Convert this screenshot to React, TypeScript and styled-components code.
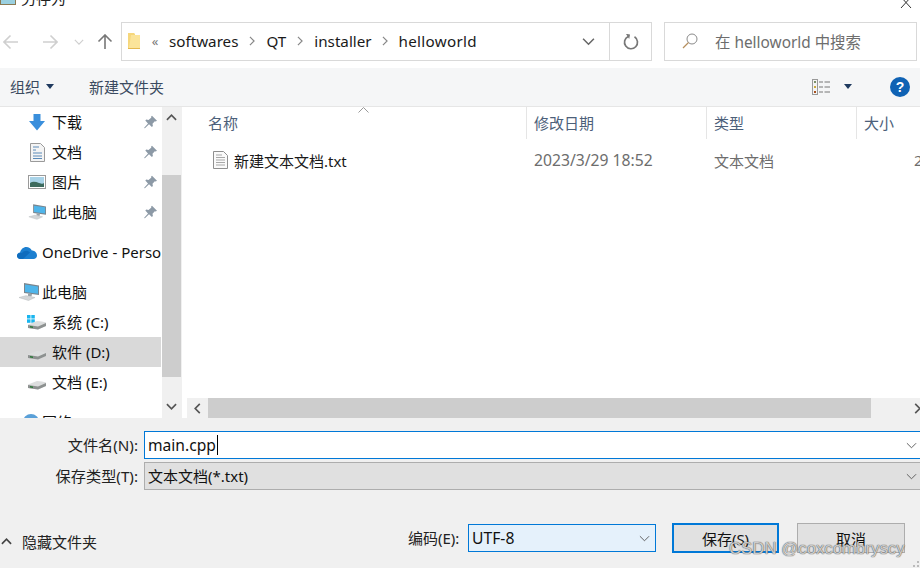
import React from "react";
import styled, { createGlobalStyle } from "styled-components";

const Global = createGlobalStyle`
  html, body { margin: 0; padding: 0; background: #fff; }
  #root { width: 920px; height: 568px; overflow: hidden; }
  * { box-sizing: border-box; }
`;
const FONT = `"Noto Sans", "Noto Sans CJK SC", sans-serif`;

const Dialog = styled.div`
  position: relative;
  width: 920px;
  height: 568px;
  display: flex;
  flex-direction: column;
  overflow: hidden;
  font-family: ${FONT};
  font-size: 15px;
  color: #111;
  background: #fff;
`;
const TitleBar = styled.div`
  height: 22px;
  flex: none;
  display: flex;
  justify-content: space-between;
  overflow: hidden;
`;
const TitleLeft = styled.div`
  display: flex;
  align-items: center;
  gap: 5px;
  height: 22px;
  margin-top: -14px;
  font-size: 15px;
  color: #222;
`;
const CloseMark = styled.svg`
  margin: 0 8px 0 0;
`;
const AddressRow = styled.div`
  height: 46px;
  flex: none;
  display: flex;
  align-items: flex-start;
`;
const NavButtons = styled.div`
  width: 121px;
  height: 39px;
  flex: none;
  display: flex;
  align-items: center;
`;
const NavSlot = styled.span<{ $w: number }>`
  width: ${(p) => p.$w}px;
  flex: none;
  display: flex;
  justify-content: center;
`;
const AddressBox = styled.div`
  width: 531px;
  height: 39px;
  flex: none;
  border: 1px solid #d9d9d9;
  display: flex;
  align-items: center;
`;
const Crumbs = styled.div`
  flex: 1;
  display: flex;
  align-items: center;
  padding: 0 0 2px 5px;
  font-size: 15.2px;
  color: #1a1a1a;
`;
const CrumbText = styled.span<{ $wide?: boolean }>`
  white-space: nowrap;
  letter-spacing: ${(p) => (p.$wide ? "0.3px" : "0")};
`;
const CrumbSep = styled.span<{ $w: number }>`
  width: ${(p) => p.$w}px;
  flex: none;
  display: flex;
  justify-content: center;
`;
const Guillemet = styled.span`
  font-size: 13px;
  color: #777;
`;
const AddrChevron = styled.span`
  width: 42px;
  flex: none;
  display: flex;
  justify-content: center;
`;
const RefreshSlot = styled.span`
  width: 42px;
  height: 37px;
  flex: none;
  border-left: 1px solid #d9d9d9;
  display: flex;
  align-items: center;
  justify-content: center;
`;
const SearchBox = styled.div`
  width: 253px;
  height: 39px;
  flex: none;
  margin-left: 12px;
  border: 1px solid #d9d9d9;
  display: flex;
  align-items: center;
  padding: 0 0 1px 17px;
  gap: 17px;
  font-size: 15.4px;
  color: #6d6d6d;
`;
const Toolbar = styled.div`
  height: 39px;
  flex: none;
  background: #f5f6f7;
  border-bottom: 1px solid #e6e6e6;
  display: flex;
  align-items: center;
  padding: 0 10px 1px 10px;
  font-size: 15px;
  color: #3a4a60;
`;
const ToolGroup = styled.div`
  display: flex;
  align-items: center;
  gap: 6px;
`;
const ViewDrop = styled.div`
  display: flex;
  align-items: center;
  gap: 14px;
  margin-right: 38px;
`;
const NewFolder = styled.span`
  margin-left: 35px;
`;
const ToolSpacer = styled.div`
  flex: 1;
`;
const Main = styled.div`
  height: 311px;
  flex: none;
  display: flex;
  overflow: hidden;
`;
const Sidebar = styled.div`
  width: 162px;
  flex: none;
  display: flex;
  flex-direction: column;
  overflow: hidden;
`;
const NavRow = styled.div<{ $indent: number; $gap: number; $sel?: boolean; $top?: number }>`
  height: 30px;
  flex: none;
  width: 161px;
  display: flex;
  align-items: center;
  padding-left: ${(p) => p.$indent}px;
  margin-top: ${(p) => p.$top ?? 0}px;
  gap: ${(p) => p.$gap}px;
  background: ${(p) => (p.$sel ? "#d9d9d9" : "transparent")};
  white-space: nowrap;
  overflow: hidden;
  color: #111;
`;
const NavIconSlot = styled.span`
  width: 18px;
  flex: none;
  display: flex;
  justify-content: center;
`;
const NavLabel = styled.span<{ $latin?: boolean }>`
  flex: 1;
  overflow: hidden;
  white-space: nowrap;
  padding-bottom: ${(p) => (p.$latin ? 0 : 2)}px;
`;
const PinSlot = styled.span`
  width: 17px;
  flex: none;
  display: flex;
`;
const VScroll = styled.div`
  width: 20px;
  flex: none;
  background: #f0f0f0;
  display: flex;
  flex-direction: column;
`;
const VCap = styled.div<{ $h: number; $pad: number }>`
  height: ${(p) => p.$h}px;
  flex: none;
  display: flex;
  justify-content: center;
  padding: ${(p) => p.$pad}px 2px 0 0;
`;
const VThumb = styled.div`
  height: 202px;
  width: 19px;
  flex: none;
  background: #cdcdcd;
`;
const List = styled.div`
  position: relative;
  flex: 1;
  margin-left: 3px;
  display: flex;
  flex-direction: column;
  min-width: 0;
`;
const SortCaret = styled.svg`
  position: absolute;
  left: 173px;
  top: 0;
`;
const Header = styled.div`
  height: 32px;
  flex: none;
  display: grid;
  grid-template-columns: 341px 180px 150px 1fr;
  color: #4c607a;
`;
const HeadCell = styled.div<{ $first?: boolean }>`
  display: flex;
  align-items: center;
  padding: 0 0 2px ${(p) => (p.$first ? 23 : 7)}px;
  border-left: ${(p) => (p.$first ? "none" : "1px solid #e5e5e5")};
`;
const FileRow = styled.div`
  height: 30px;
  margin-top: 7px;
  flex: none;
  display: grid;
  grid-template-columns: 341px 180px 150px 1fr;
  align-items: center;
  padding-bottom: 2px;
`;
const NameCell = styled.div`
  display: flex;
  align-items: center;
  gap: 6px;
  padding-left: 28px;
  color: #1a1a1a;
`;
const MetaCell = styled.div<{ $pad?: number; $size?: number }>`
  padding-left: ${(p) => p.$pad ?? 8}px;
  font-size: ${(p) => p.$size ?? 15}px;
  color: #6d6d6d;
  white-space: nowrap;
`;
const ListFill = styled.div`
  flex: 1;
`;
const HScroll = styled.div`
  height: 20px;
  flex: none;
  margin: 0 0 0 2px;
  background: #f0f0f0;
  display: flex;
  align-items: stretch;
`;
const HCap = styled.div<{ $w: number }>`
  width: ${(p) => p.$w}px;
  flex: none;
  display: flex;
  align-items: center;
  justify-content: center;
`;
const HThumb = styled.div`
  width: 663px;
  flex: none;
  background: #cdcdcd;
`;
const HTail = styled.div`
  flex: 1;
  display: flex;
  align-items: center;
  justify-content: flex-end;
  margin-right: -3px;
`;
const Footer = styled.div`
  flex: 1;
  background: #f0f0f0;
  display: flex;
  flex-direction: column;
  padding-top: 13px;
`;
const FieldRow = styled.div<{ $top?: number }>`
  height: 28px;
  flex: none;
  display: flex;
  align-items: center;
  margin-top: ${(p) => p.$top ?? 0}px;
`;
const FieldLabel = styled.div`
  width: 138px;
  flex: none;
  text-align: right;
  color: #222;
  font-size: 15.2px;
  padding-bottom: 2px;
`;
const NameInput = styled.div`
  height: 28px;
  flex: 1;
  margin-left: 6px;
  background: #fff;
  border: 1px solid #0078d7;
  border-right: none;
  display: flex;
  align-items: center;
  padding-left: 3px;
  color: #111;
  font-size: 15.6px;
`;
const Caret = styled.span`
  width: 1px;
  height: 20px;
  margin-left: 1px;
  background: #000;
`;
const GrowSpace = styled.div`
  flex: 1;
`;
const TypeSelect = styled.div`
  height: 28px;
  flex: 1;
  margin-left: 6px;
  background: #e0e0e0;
  border: 1px solid #adadad;
  border-right: none;
  display: flex;
  align-items: center;
  padding: 0 0 0 3px;
  color: #111;
`;
const TypeText = styled.span`
  padding-bottom: 2px;
`;
const ChevronEnd = styled.span`
  width: 14px;
  flex: none;
  display: flex;
`;
const ActionRow = styled.div`
  height: 30px;
  flex: none;
  margin-top: 33px;
  display: flex;
  align-items: center;
`;
const HideToggle = styled.div`
  display: flex;
  align-items: center;
  gap: 10px;
  padding: 6px 0 0 1px;
  width: 408px;
  flex: none;
  color: #222;
`;
const EncLabel = styled.div`
  width: 60px;
  flex: none;
  color: #222;
  padding-bottom: 1px;
`;
const EncSelect = styled.div`
  width: 188px;
  height: 28px;
  flex: none;
  background: #e5f1fb;
  border: 1px solid #0078d7;
  display: flex;
  align-items: center;
  justify-content: space-between;
  padding: 0 5px 0 3px;
  color: #111;
  font-size: 15.7px;
`;
const DlgButton = styled.div<{ $primary?: boolean; $left: number }>`
  height: 30px;
  width: ${(p) => (p.$primary ? 107 : 108)}px;
  flex: none;
  margin-left: ${(p) => p.$left}px;
  background: #e1e1e1;
  border: ${(p) => (p.$primary ? "2px solid #0078d7" : "1px solid #adadad")};
  display: flex;
  align-items: center;
  justify-content: center;
  color: #111;
`;
const Watermark = styled.div`
  position: absolute;
  left: 729px;
  top: 539px;
  font-family: "Liberation Sans", sans-serif;
  font-size: 16.8px;
  color: rgba(255, 255, 255, 0.7);
  text-shadow: 0 0 1px #555, 0 0 1px #555;
  white-space: nowrap;
`;
const Grip = styled.svg`
  position: absolute;
  right: 0;
  bottom: 0;
`;

const Arrow = ({ dir, color }: { dir: "l" | "r" | "u"; color: string }) => {
  const rot = dir === "l" ? 0 : dir === "r" ? 180 : 90;
  return (
    <svg width="16" height="16" viewBox="0 0 16 16" style={{ transform: `rotate(${rot}deg)` }}>
      <path d="M1 8h14M7.500 1.500 1 8l6.500 6.500" fill="none" stroke={color} strokeWidth="1.6" />
    </svg>
  );
};
const Chevron = ({ dir = "d", color = "#666", size = 12, w = 1.2 }: { dir?: "d" | "u" | "l" | "r"; color?: string; size?: number; w?: number }) => {
  const rot = { d: 0, u: 180, l: 90, r: -90 }[dir];
  return (
    <svg width={size} height={size} viewBox="0 0 12 12" style={{ transform: `rotate(${rot}deg)` }}>
      <path d="M1 3.500 6 8.500l5-5" fill="none" stroke={color} strokeWidth={w} />
    </svg>
  );
};
const Folder = () => (
  <svg width="14" height="18" viewBox="0 0 14 18">
    <path d="M1 1h6l1 1v14H1z" fill="#f6d77c" />
    <path d="M4 3h9v13H2z" fill="#fbe49a" />
    <path d="M1 16h12v1H1z" fill="#e4b850" />
  </svg>
);
const Pin = () => (
  <svg width="14" height="14" viewBox="0 0 14 14">
    <path d="M8 .8l5 5-1.400.8-.8-.4-2.300 2.600.4 2.200-1 1L5 9.300.9 13.300 0 13l4-4.600-2.700-2.800 1-1 2.200.4L7.400 2.500 7 1.700z" fill="#8c99a6" />
  </svg>
);
const Download = () => (
  <svg width="18" height="17" viewBox="0 0 18 17">
    <path d="M5.500 0h7v7H17l-8 9.500L1 7h4.500z" fill="#3a8fdc" />
  </svg>
);
const DocIcon = () => (
  <svg width="15" height="19" viewBox="0 0 15 19">
    <path d="M.5.500h10l4 4v14H.5z" fill="#f4f4f4" stroke="#9a9a9a" />
    <path d="M3 4h6M3 7h3M3 10h9M3 13h9M3 15.500h9" stroke="#5a8ab8" strokeWidth="1" />
  </svg>
);
const PicIcon = () => (
  <svg width="18" height="14" viewBox="0 0 18 14">
    <rect x=".5" y=".5" width="17" height="13" fill="#fff" stroke="#9a9a9a" />
    <rect x="2" y="2" width="14" height="10" fill="#a9d3e8" />
    <path d="M2 8c3-2 6-1 9 0s4 1 5 0v4H2z" fill="#3d6b5e" />
  </svg>
);
const PcIcon = () => (
  <svg width="21" height="19" viewBox="0 0 21 19">
    <path d="M6 0l15 2.500v9.500L6 10z" fill="#7a858d" />
    <path d="M7 1.500l13 2v7.300L7 9z" fill="#4fb5ea" />
    <path d="M10 10.500l4 .6-.5 2.500-3.500-.6z" fill="#9aa2a8" />
    <path d="M1 14.500l7-1.800 9 1.800-6.500 3z" fill="#d3d6d8" stroke="#b4b8ba" strokeWidth=".5" />
  </svg>
);
const Cloud = () => (
  <svg width="20" height="13" viewBox="0 0 20 13">
    <path d="M3.500 13C1.300 13 0 11.500 0 9.800c0-1.700 1.300-3 3-3.200C3.800 3.400 6.300 1 9.300 1c2.500 0 4.500 1.300 5.500 3.500C17.800 4.500 20 6.700 20 9.500c0 2.200-1.600 3.500-3.500 3.500z" fill="#1c7fd0" />
    <path d="M5 7c2-3 6-3 8-.5l-7 6.500H3.500C1.500 13 0 11.500 0 9.800 0 8 2 6.500 5 7z" fill="#0f6cbd" />
  </svg>
);
const Drive = ({ win }: { win?: boolean }) => (
  <svg width="20" height="15" viewBox="0 0 20 15">
    {win && (
      <g fill="#19b5ef">
        <rect x="0" y="0" width="3.500" height="3.500" />
        <rect x="4.300" y="0" width="3.500" height="3.500" />
        <rect x="0" y="4.300" width="3.500" height="3.500" />
        <rect x="4.300" y="4.300" width="3.500" height="3.500" />
      </g>
    )}
    <path d="M1 9.500 10 6c3.500.2 6.500.6 9 1.500v3.500l-8 3.500L1 13z" fill="#dcdede" />
    <path d="M1 10l10 1.500 8-3.500v3l-8 3.500L1 13z" fill="#8d9190" />
    <path d="M3 11l3 .5v1.500l-3-.5z" fill="#2d7a3a" />
  </svg>
);
const Refresh = () => (
  <svg width="16" height="16" viewBox="0 0 16 16">
    <path d="M5.200 2.400A6.500 6.500 0 1 0 11.500 2.800" fill="none" stroke="#777" strokeWidth="1.700" />
    <path d="M2.500 0h4.200v4.500z" fill="#777" transform="rotate(10 4 2)" />
  </svg>
);
const Search = () => (
  <svg width="16" height="16" viewBox="0 0 16 16">
    <circle cx="10" cy="6" r="5" fill="none" stroke="#8a8a8a" strokeWidth="1" />
    <path d="M6.500 9.500 1 15" stroke="#b58f5e" strokeWidth="1.300" />
  </svg>
);
const ViewIcon = () => (
  <svg width="18" height="16" viewBox="0 0 18 16">
    <rect x=".5" y=".5" width="5" height="15" fill="#f4f4f4" stroke="#999" />
    <rect x="2" y="2" width="2" height="2" fill="#7a8f6a" />
    <rect x="2" y="7" width="2" height="2" fill="#c9a93c" />
    <rect x="2" y="12" width="2" height="2" fill="#a8501e" />
    <path d="M7 3h4M12.500 3H18M7 8h4M12.500 8H18M7 13h4M12.500 13H18" stroke="#777" />
  </svg>
);
const DropTri = () => (
  <svg width="8" height="5" viewBox="0 0 8 5">
    <path d="M0 0h8L4 5z" fill="#1f3a5f" />
  </svg>
);
const Help = () => (
  <svg width="20" height="20" viewBox="0 0 20 20">
    <circle cx="10" cy="10" r="10" fill="#0f62b4" />
    <text x="10" y="15" textAnchor="middle" fontFamily="Liberation Sans" fontWeight="700" fontSize="14" fill="#fff">?</text>
  </svg>
);
const FileIcon = () => (
  <svg width="15" height="18" viewBox="0 0 15 18">
    <path d="M.5.500h10l4 4v13H.5z" fill="#fafafa" stroke="#8f8f8f" />
    <path d="M3 4h6M3 6.500h9M3 9h9M3 11.500h9M3 14h9" stroke="#a8a8a8" />
  </svg>
);
const TitleIcon = () => (
  <svg width="16" height="16" viewBox="0 0 16 16">
    <rect x=".5" y=".5" width="15" height="15" fill="#9ad0e0" stroke="#8a7a55" />
  </svg>
);

const quick = [
  { label: "下载", icon: <Download /> },
  { label: "文档", icon: <DocIcon /> },
  { label: "图片", icon: <PicIcon /> },
  { label: "此电脑", icon: <PcIcon /> },
];
const Sep = ({ w }: { w: number }) => (
  <CrumbSep $w={w}>
    <Chevron dir="r" color="#888" size={10} w={1.4} />
  </CrumbSep>
);

export default function App() {
  return (
    <Dialog>
      <Global />
      <TitleBar>
        <TitleLeft>
          <TitleIcon />
          <span>另存为</span>
        </TitleLeft>
        <CloseMark width="12" height="12" viewBox="0 0 12 12">
          <path d="M1-2 11 9M11-2 1 9" stroke="#333" strokeWidth="1" transform="translate(0 -1)" />
        </CloseMark>
      </TitleBar>
      <AddressRow>
        <NavButtons>
          <NavSlot $w={21}><Arrow dir="l" color="#cfcfcf" /></NavSlot>
          <NavSlot $w={21} />
          <NavSlot $w={16}><Arrow dir="r" color="#cfcfcf" /></NavSlot>
          <NavSlot $w={12} />
          <NavSlot $w={18}><Chevron color="#cfcfcf" size={10} w={1.4} /></NavSlot>
          <NavSlot $w={9} />
          <NavSlot $w={16}><Arrow dir="u" color="#777" /></NavSlot>
        </NavButtons>
        <AddressBox>
          <Crumbs>
            <Folder />
            <CrumbSep $w={28}><Guillemet>«</Guillemet></CrumbSep>
            <CrumbText>softwares</CrumbText>
            <Sep w={28} />
            <CrumbText>QT</CrumbText>
            <Sep w={28} />
            <CrumbText>installer</CrumbText>
            <Sep w={27} />
            <CrumbText $wide>helloworld</CrumbText>
          </Crumbs>
          <AddrChevron><Chevron color="#666" size={13} w={1.4} /></AddrChevron>
          <RefreshSlot><Refresh /></RefreshSlot>
        </AddressBox>
        <SearchBox>
          <Search />
          <span>在 helloworld 中搜索</span>
        </SearchBox>
      </AddressRow>
      <Toolbar>
        <ToolGroup>
          <span>组织</span>
          <DropTri />
        </ToolGroup>
        <NewFolder>新建文件夹</NewFolder>
        <ToolSpacer />
        <ViewDrop>
          <ViewIcon />
          <DropTri />
        </ViewDrop>
        <Help />
      </Toolbar>
      <Main>
        <Sidebar>
          {quick.map((q) => (
            <NavRow key={q.label} $indent={28} $gap={6}>
              <NavIconSlot>{q.icon}</NavIconSlot>
              <NavLabel>{q.label}</NavLabel>
              <PinSlot><Pin /></PinSlot>
            </NavRow>
          ))}
          <NavRow $indent={17} $gap={5} $top={10}>
            <Cloud />
            <NavLabel $latin>OneDrive - Personal</NavLabel>
          </NavRow>
          <NavRow $indent={18} $gap={3} $top={10}>
            <PcIcon />
            <NavLabel>此电脑</NavLabel>
          </NavRow>
          <NavRow $indent={27} $gap={5}>
            <Drive win />
            <NavLabel>系统 (C:)</NavLabel>
          </NavRow>
          <NavRow $indent={27} $gap={5} $sel>
            <Drive />
            <NavLabel>软件 (D:)</NavLabel>
          </NavRow>
          <NavRow $indent={27} $gap={5}>
            <Drive />
            <NavLabel>文档 (E:)</NavLabel>
          </NavRow>
          <NavRow $indent={22} $gap={2} $top={10}>
            <svg width="18" height="18" viewBox="0 0 18 18"><circle cx="9" cy="9" r="8" fill="#5aa0d8" /></svg>
            <NavLabel>网络</NavLabel>
          </NavRow>
        </Sidebar>
        <VScroll>
          <VCap $h={68} $pad={5}><Chevron dir="u" color="#555" size={11} w={1.8} /></VCap>
          <VThumb />
          <VCap $h={41} $pad={24}><Chevron color="#555" size={11} w={1.8} /></VCap>
        </VScroll>
        <List>
          <SortCaret width="11" height="6" viewBox="0 0 11 6">
            <path d="M.5 5.500 5.500.5l5 5" fill="none" stroke="#999" />
          </SortCaret>
          <Header>
            <HeadCell $first>名称</HeadCell>
            <HeadCell>修改日期</HeadCell>
            <HeadCell>类型</HeadCell>
            <HeadCell>大小</HeadCell>
          </Header>
          <FileRow>
            <NameCell>
              <FileIcon />
              <span>新建文本文档.txt</span>
            </NameCell>
            <MetaCell $size={15.7}>2023/3/29 18:52</MetaCell>
            <MetaCell>文本文档</MetaCell>
            <MetaCell $pad={58}>2</MetaCell>
          </FileRow>
          <ListFill />
          <HScroll>
            <HCap $w={21}><Chevron dir="l" color="#555" size={11} w={1.8} /></HCap>
            <HThumb />
            <HTail><Chevron dir="r" color="#555" size={11} w={1.8} /></HTail>
          </HScroll>
        </List>
      </Main>
      <Footer>
        <FieldRow>
          <FieldLabel>文件名(N):</FieldLabel>
          <NameInput>
            <span>main.cpp</span>
            <Caret />
            <GrowSpace />
            <ChevronEnd><Chevron color="#555" size={11} w={1} /></ChevronEnd>
          </NameInput>
        </FieldRow>
        <FieldRow $top={3}>
          <FieldLabel>保存类型(T):</FieldLabel>
          <TypeSelect>
            <TypeText>文本文档(*.txt)</TypeText>
            <GrowSpace />
            <ChevronEnd><Chevron color="#555" size={11} w={1} /></ChevronEnd>
          </TypeSelect>
        </FieldRow>
        <ActionRow>
          <HideToggle>
            <Chevron dir="u" color="#444" size={11} w={1.8} />
            <span>隐藏文件夹</span>
          </HideToggle>
          <EncLabel>编码(E):</EncLabel>
          <EncSelect>
            <span>UTF-8</span>
            <Chevron color="#555" size={11} w={1} />
          </EncSelect>
          <DlgButton $primary $left={16}>保存(S)</DlgButton>
          <DlgButton $left={18}>取消</DlgButton>
        </ActionRow>
      </Footer>
      <Watermark>CSDN @coxcombryscy</Watermark>
      <Grip width="10" height="10" viewBox="0 0 10 10">
        <path d="M7 7h2v2H7zM3 7h2v2H3zM7 3h2v2H7z" fill="#bbb" />
      </Grip>
    </Dialog>
  );
}
